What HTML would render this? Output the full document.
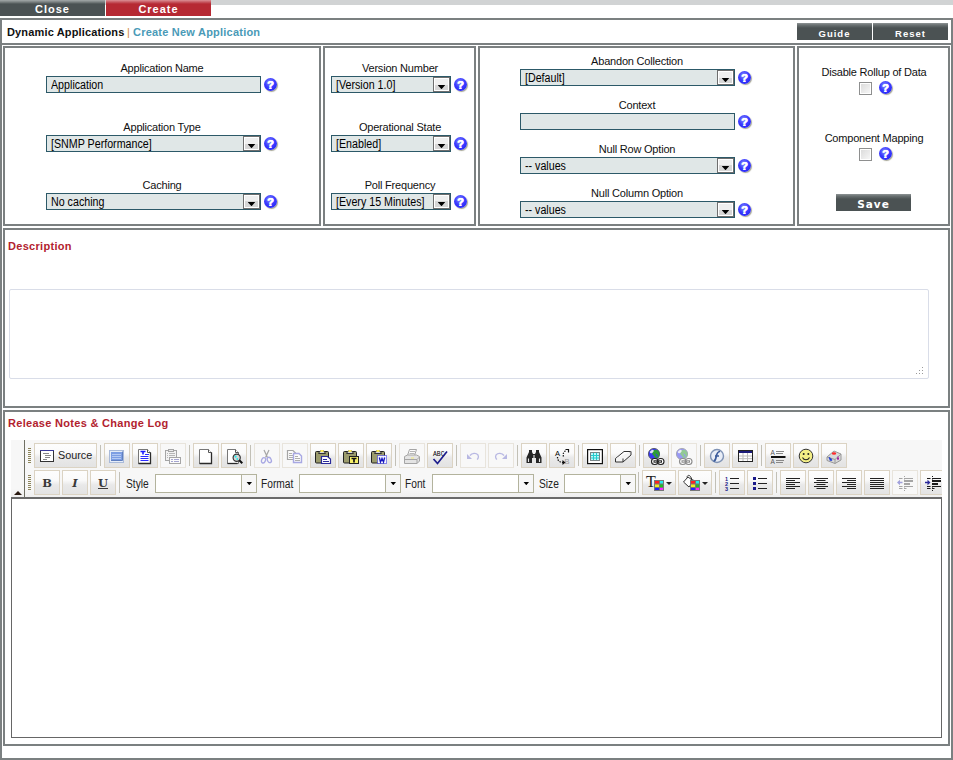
<!DOCTYPE html>
<html><head><meta charset="utf-8"><title>Dynamic Applications | Create New Application</title>
<style>
html,body{margin:0;padding:0;background:#fff}
body{width:953px;height:760px;position:relative;overflow:hidden;font-family:"Liberation Sans",sans-serif;font-size:11px;color:#1c1c1c}
div,span{box-sizing:border-box}
.a{position:absolute}
.box{position:absolute;border:2px solid #7b8081;background:#fff}
.tab{position:absolute;top:0;height:16px;color:#fff;font-weight:bold;font-size:11px;letter-spacing:1px;text-align:center;line-height:19px;overflow:hidden}
.btn{position:absolute;height:17px;width:75px;color:#fff;font-weight:bold;font-size:9.5px;letter-spacing:1px;text-align:center;line-height:22px;overflow:hidden;background:linear-gradient(#8e9495 0,#6a7172 2px,#4b5253 5px,#4b5253 100%)}
.lbl{position:absolute;text-align:center;font-size:11px;line-height:13px;white-space:nowrap;letter-spacing:-.2px;color:#111}
.fld{position:absolute;height:17px;border:1px solid #2c5968;background:#e0e7e7;font-size:12px;line-height:15px;white-space:nowrap;overflow:hidden}
.fld span.t{position:absolute;left:4px;top:1px;color:#000;transform:scaleX(.89);transform-origin:0 50%}
.arr{position:absolute;right:0;top:0;width:17px;height:15px;border:1px solid #6e6e6e;background:#fff}
.arr i{position:absolute;left:1px;top:1px;right:1px;bottom:1px;background:linear-gradient(#efefef 0,#efefef 50%,#d6d6d6 50%,#d6d6d6 100%)}
.arr b{position:absolute;left:3.7px;top:7px;width:7.6px;height:4.3px;background:#000;clip-path:polygon(0 0,100% 0,50% 100%)}
.help{position:absolute;width:13px;height:13px;border-radius:50%;background:radial-gradient(circle at 45% 35%,#8f96ff 0,#3b3bff 45%,#1a1af0 100%);box-shadow:1px 1px 1px rgba(90,90,60,.55);color:#fff;font-weight:bold;font-size:11px;line-height:15px;text-align:center;text-shadow:.35px 0 0 #fff,-.35px 0 0 #fff;overflow:hidden}
.cb{position:absolute;width:13px;height:13px;border:1px solid #8e8f8f;background:#fff}
.cb i{position:absolute;left:1px;top:1px;right:1px;bottom:1px;background:linear-gradient(135deg,#dcdcdc,#f6f6f6)}
.h{position:absolute;font-weight:bold;font-size:11px;line-height:13px;white-space:nowrap}
.tb{position:absolute;height:25px;border:1px solid #dbd3c3;background:linear-gradient(#fdfdfd 0,#fafafa 40%,#e9e9e9 60%,#e3e3e3 100%)}
.tb.d{border-color:#e8e4dc;background:#f8f8f8}
.tb svg{position:absolute;left:4px;top:4px;width:16px;height:16px;overflow:visible}
.tb.d svg{opacity:.5}
.sep{position:absolute;width:1px;height:21px;background:#c2c0b6}
.grip{position:absolute;width:3px;height:15px;background:repeating-linear-gradient(#8d855a 0,#8d855a 1px,transparent 1px,transparent 2px)}
.cl{position:absolute;font-size:12px;line-height:14px;white-space:nowrap;transform:scaleX(.85);transform-origin:0 50%;color:#222}
.combo{position:absolute;height:19px;border:1px solid #b3b39d;background:#fff}
.combo i{position:absolute;right:0;top:0;bottom:0;width:14px;border-left:1px solid #b3b39d;background:#f7f7f7}
.combo b{position:absolute;right:3.8px;top:6.8px;width:5.8px;height:3.4px;background:#000;clip-path:polygon(0 0,100% 0,50% 100%)}
</style></head>
<body>
<div class="a" style="left:0;top:0;width:953px;height:5px;background:#d1d3d4"></div>
<div class="tab" style="left:0;width:105px;background:linear-gradient(#a4a9aa 0,#7b8182 2px,#4b5254 4px,#4b5254 100%)">Close</div>
<div class="tab" style="left:106px;width:105px;background:linear-gradient(#dc9096 0,#c75a62 2px,#b62933 4px,#b62933 100%)">Create</div>
<div class="box" style="left:0;top:18px;width:953px;height:742px"></div>
<div class="a" style="left:2px;top:43px;width:949px;height:2px;background:#7b8081"></div>
<div class="h" style="left:7px;top:26px;color:#111;letter-spacing:.15px">Dynamic Applications</div>
<div class="h" style="left:127px;top:26px;color:#d4883f;font-weight:normal">|</div>
<div class="h" style="left:133px;top:26px;color:#4a9ab7;letter-spacing:.22px">Create New Application</div>
<div class="btn" style="left:797px;top:23px">Guide</div>
<div class="btn" style="left:873px;top:23px">Reset</div>
<div class="box" style="left:3px;top:46px;width:318px;height:180px"></div>
<div class="box" style="left:323px;top:46px;width:153px;height:180px"></div>
<div class="box" style="left:478px;top:46px;width:317px;height:180px"></div>
<div class="box" style="left:797px;top:46px;width:153px;height:180px"></div>
<div class="box" style="left:3px;top:228px;width:947px;height:180px"></div>
<div class="box" style="left:3px;top:410px;width:947px;height:336px"></div>
<div class="lbl" style="left:62px;top:62px;width:200px">Application Name</div>
<div class="fld" style="left:46px;top:76px;width:215px"><span class="t">Application</span></div>
<div class="help" style="left:264px;top:78px">?</div>
<div class="lbl" style="left:62px;top:121px;width:200px">Application Type</div>
<div class="fld" style="left:46px;top:135px;width:215px"><span class="t">[SNMP Performance]</span><span class="arr"><i></i><b></b></span></div>
<div class="help" style="left:264px;top:137px">?</div>
<div class="lbl" style="left:62px;top:179px;width:200px">Caching</div>
<div class="fld" style="left:46px;top:193px;width:215px"><span class="t">No caching</span><span class="arr"><i></i><b></b></span></div>
<div class="help" style="left:264px;top:195px">?</div>
<div class="lbl" style="left:300px;top:62px;width:200px">Version Number</div>
<div class="fld" style="left:331px;top:76px;width:120px"><span class="t">[Version 1.0]</span><span class="arr"><i></i><b></b></span></div>
<div class="help" style="left:454px;top:78px">?</div>
<div class="lbl" style="left:300px;top:121px;width:200px">Operational State</div>
<div class="fld" style="left:331px;top:135px;width:120px"><span class="t">[Enabled]</span><span class="arr"><i></i><b></b></span></div>
<div class="help" style="left:454px;top:137px">?</div>
<div class="lbl" style="left:300px;top:179px;width:200px">Poll Frequency</div>
<div class="fld" style="left:331px;top:193px;width:120px"><span class="t">[Every 15 Minutes]</span><span class="arr"><i></i><b></b></span></div>
<div class="help" style="left:454px;top:195px">?</div>
<div class="lbl" style="left:537px;top:55px;width:200px">Abandon Collection</div>
<div class="fld" style="left:520px;top:69px;width:215px"><span class="t">[Default]</span><span class="arr"><i></i><b></b></span></div>
<div class="help" style="left:738px;top:71px">?</div>
<div class="lbl" style="left:537px;top:99px;width:200px">Context</div>
<div class="fld" style="left:520px;top:113px;width:215px"></div>
<div class="help" style="left:738px;top:115px">?</div>
<div class="lbl" style="left:537px;top:143px;width:200px">Null Row Option</div>
<div class="fld" style="left:520px;top:157px;width:215px"><span class="t">-- values</span><span class="arr"><i></i><b></b></span></div>
<div class="help" style="left:738px;top:159px">?</div>
<div class="lbl" style="left:537px;top:187px;width:200px">Null Column Option</div>
<div class="fld" style="left:520px;top:201px;width:215px"><span class="t">-- values</span><span class="arr"><i></i><b></b></span></div>
<div class="help" style="left:738px;top:203px">?</div>
<div class="lbl" style="left:774px;top:66px;width:200px">Disable Rollup of Data</div>
<div class="cb" style="left:859px;top:82px"><i></i></div>
<div class="help" style="left:879px;top:81px">?</div>
<div class="lbl" style="left:774px;top:132px;width:200px">Component Mapping</div>
<div class="cb" style="left:859px;top:148px"><i></i></div>
<div class="help" style="left:879px;top:147px">?</div>
<div class="btn" style="left:836px;top:194px;font-family:'DejaVu Sans',sans-serif;font-size:10.5px;line-height:20px">Save</div>
<div class="h" style="left:8px;top:240px;color:#b2222e;letter-spacing:.3px">Description</div>
<div class="a" style="left:9px;top:289px;width:920px;height:90px;border:1px solid #d9dde8;border-radius:2px;background:#fff"></div>
<div class="a" style="left:922px;top:367px;width:1px;height:1px;background:#9a9a9a"></div><div class="a" style="left:919px;top:370px;width:1px;height:1px;background:#9a9a9a"></div><div class="a" style="left:922px;top:370px;width:1px;height:1px;background:#9a9a9a"></div><div class="a" style="left:916px;top:373px;width:1px;height:1px;background:#9a9a9a"></div><div class="a" style="left:919px;top:373px;width:1px;height:1px;background:#9a9a9a"></div><div class="a" style="left:922px;top:373px;width:1px;height:1px;background:#9a9a9a"></div>
<div class="h" style="left:8px;top:417px;color:#b2222e;letter-spacing:.3px">Release Notes &amp; Change Log</div>
<div class="a" style="left:11px;top:440px;width:931px;height:57px;background:linear-gradient(#f7f7f7 0,#f7f7f7 85%,#efefef 100%);overflow:hidden" id="tbar">
<div class="a" style="left:13px;top:0;width:1px;height:57px;background:#6f6f63"></div>
<div class="a" style="left:3px;top:51px;width:0;height:0;border-left:4px solid transparent;border-right:4px solid transparent;border-bottom:4px solid #2a1a10"></div>
<div class="grip" style="left:17px;top:8px"></div><div class="grip" style="left:17px;top:35px"></div>
<div class="tb" style="left:23px;top:3px;width:63px"><svg viewBox="0 0 16 16"><rect x="1.500" y="2.500" width="13" height="11" fill="#fff" stroke="#333"/><rect x="1" y="2" width="14" height="1" fill="#3a3a9a"/><path d="M4 5.500h6M6 7.500h6M6 9.500h5M4 11.500h4" stroke="#888" fill="none"/></svg><span class="cl" style="left:23px;top:4px;font-size:11.500px;transform:scaleX(.94)">Source</span></div>
<div class="sep" style="left:89px;top:5px"></div>
<div class="tb" style="left:93px;top:3px;width:26px"><svg viewBox="0 0 16 16"><rect x="0.500" y="2.500" width="14" height="12" fill="#e6edf8" stroke="#a9bad9"/><rect x="2" y="4" width="11" height="9" fill="#7d9ee3"/><path d="M2 12.500h11.500v-9" stroke="#5f7fc0" fill="none"/><path d="M3 6.500h9M3 8.500h9M3 10.500h9" stroke="#b4c9f3" fill="none"/></svg></div>
<div class="tb" style="left:121px;top:3px;width:26px"><svg viewBox="0 0 16 16"><path d="M1.500 1.500h9l3 3v11h-12z" fill="#fff" stroke="#777"/><path d="M10.500 1.500v3h3" fill="#fff" stroke="#555"/><path d="M1.500 15.500h12v-11" fill="none" stroke="#2a2a2a" stroke-width="1.300"/><path d="M3.500 3.500h5M6 3.500v3" stroke="#1a1aff" stroke-width="1.600" fill="none"/><path d="M8 6.500h4M3.500 8.500h8M3.500 10.500h8M3.500 12.500h8" stroke="#2a2aff" fill="none"/></svg></div>
<div class="tb d" style="left:149px;top:3px;width:26px"><svg viewBox="0 0 16 16"><rect x="0.500" y="2.500" width="11" height="10" fill="#eee" stroke="#555"/><rect x="3.500" y="1.500" width="5" height="2" fill="#ddd" stroke="#555"/><path d="M2 5.500h1M2 7.500h1M2 9.500h1M4 5.500h6M4 7.500h6" stroke="#777"/><rect x="4.500" y="9.500" width="11" height="6" fill="#fff" stroke="#555"/><path d="M6 11.500h2M9 11.500h5M6 13.500h2M9 13.500h5" stroke="#55a" fill="none"/></svg></div>
<div class="sep" style="left:178px;top:5px"></div>
<div class="tb" style="left:182px;top:3px;width:26px"><svg viewBox="0 0 16 16"><path d="M1.5 1.5h9l3 3v11h-12z" fill="#fff" stroke="#777"/><path d="M10.5 1.5v3h3" fill="#fff" stroke="#555"/><path d="M1.5 15.500h12v-11" fill="none" stroke="#2a2a2a" stroke-width="1.300"/></svg></div>
<div class="tb" style="left:210px;top:3px;width:26px"><svg viewBox="0 0 16 16"><path d="M1.5 1.5h8l3 3v11h-11z" fill="#fff" stroke="#777"/><path d="M9.500 1.500v3h3" fill="#fff" stroke="#555"/><path d="M1.500 15.500h10" stroke="#2a2a2a" stroke-width="1.300"/><circle cx="10.700" cy="9.700" r="3.600" fill="#d6d6d6" stroke="#333" stroke-width="1.200"/><circle cx="9.600" cy="8.600" r="1.100" fill="#2ee"/><circle cx="11.300" cy="11" r=".900" fill="#2ee"/><path d="M13.300 12.300l3 3" stroke="#111" stroke-width="2"/></svg></div>
<div class="sep" style="left:239px;top:5px"></div>
<div class="tb d" style="left:243px;top:3px;width:26px"><svg viewBox="0 0 16 16"><path d="M5 2l3.500 7.500M10 2l-3.500 7.500" stroke="#555" stroke-width="1.200" fill="none"/><ellipse cx="4.500" cy="12.300" rx="1.900" ry="2.800" transform="rotate(25 4.500 12.300)" fill="none" stroke="#5a5ad0" stroke-width="1.300"/><ellipse cx="10.300" cy="12" rx="1.900" ry="2.800" transform="rotate(-25 10.300 12)" fill="none" stroke="#5a5ad0" stroke-width="1.300"/></svg></div>
<div class="tb d" style="left:271px;top:3px;width:26px"><svg viewBox="0 0 16 16"><path d="M0.500 2.500h5.500l2.500 2.500v6.500h-8z" fill="#fff" stroke="#555" stroke-width="1.200"/><path d="M2 5.500h3M2 7.500h5M2 9.500h5" stroke="#666"/><path d="M6.500 5.500h5.500l2.500 2.500v6.500h-8z" fill="#fff" stroke="#5a5ad0" stroke-width="1.400"/><path d="M8 8.500h3M8 10.500h5M8 12.500h5" stroke="#666"/></svg></div>
<div class="tb" style="left:299px;top:3px;width:26px"><svg viewBox="0 0 16 16"><rect x="0.500" y="3.500" width="13" height="11.500" rx="1" fill="#9b9b6c" stroke="#222"/><path d="M3.500 5.500l1.500-2.500h4l1.500 2.500z" fill="#d8d8d8" stroke="#333"/><rect x="5.500" y="2" width="3" height="2" fill="#ffee55"/><path d="M6.500 8.500h6l3 2.500v4.500h-9z" fill="#fff" stroke="#2a2a9a" stroke-width="1.200"/><path d="M8 11.500h4M8 13.500h6" stroke="#2a2a9a" stroke-width="1.200"/></svg></div>
<div class="tb" style="left:327px;top:3px;width:26px"><svg viewBox="0 0 16 16"><rect x="0.500" y="3.500" width="13" height="11.500" rx="1" fill="#9b9b6c" stroke="#222"/><path d="M3.500 5.500l1.500-2.500h4l1.500 2.500z" fill="#d8d8d8" stroke="#333"/><rect x="5.500" y="2" width="3" height="2" fill="#ffee55"/><rect x="6.500" y="8.500" width="9" height="7" fill="#f7f06a" stroke="#222"/><path d="M8.500 10.500h5M11 10.500v4" stroke="#111" stroke-width="1.700" fill="none"/></svg></div>
<div class="tb" style="left:355px;top:3px;width:26px"><svg viewBox="0 0 16 16"><rect x="0.500" y="3.500" width="13" height="11.500" rx="1" fill="#9b9b6c" stroke="#222"/><path d="M3.500 5.500l1.500-2.500h4l1.500 2.500z" fill="#d8d8d8" stroke="#333"/><rect x="5.500" y="2" width="3" height="2" fill="#ffee55"/><rect x="6.500" y="7.500" width="9" height="8" fill="#fff" stroke="#1a1ae0" stroke-dasharray="1 1"/><rect x="7.500" y="8.500" width="7" height="6" fill="#e8ebff"/><path d="M8.300 9.500l1.200 4.500 1.500-3.500 1.500 3.500 1.200-4.500" stroke="#1a1ac0" stroke-width="1.300" fill="none"/></svg></div>
<div class="sep" style="left:384px;top:5px"></div>
<div class="tb d" style="left:388px;top:3px;width:26px"><svg viewBox="0 0 16 16"><path d="M3.500 7.500l2-6h7l-2 6z" fill="#fff" stroke="#555"/><path d="M6 3.500h5M5.500 5.500h5" stroke="#777"/><path d="M0.500 8.500l3-1.500h9l3 1.500v4.500l-2.500 2.500h-12.500z" fill="#d2d2d2" stroke="#555"/><path d="M0.500 11.500h12.500l2.500-2.500" stroke="#555" fill="none"/><path d="M13 11.500v4" stroke="#555"/><rect x="7" y="9.500" width="3" height="1" fill="#e8d800"/></svg></div>
<div class="tb" style="left:416px;top:3px;width:26px"><svg viewBox="0 0 16 16"><text x="1" y="7.500" font-family="Liberation Mono,monospace" font-size="7" fill="#000" textLength="11.500" lengthAdjust="spacingAndGlyphs">ABC</text><path d="M1.500 11l4 4.500 9.500-12" stroke="#1c1c8c" stroke-width="1.700" fill="none"/></svg></div>
<div class="sep" style="left:445px;top:5px"></div>
<div class="tb d" style="left:449px;top:3px;width:26px"><svg viewBox="0 0 16 16"><path d="M2 6v5h5z" fill="#7a7ad0"/><path d="M5 7.500C7 5 11 4.500 13 7c1 2 0 4-1 4.500" stroke="#7a7ad0" stroke-width="1.300" fill="none"/></svg></div>
<div class="tb d" style="left:477px;top:3px;width:26px"><svg viewBox="0 0 16 16"><path d="M14 6v5h-5z" fill="#7a7ad0"/><path d="M11 7.500C9 5 5 4.500 3 7c-1 2 0 4 1 4.500" stroke="#7a7ad0" stroke-width="1.300" fill="none"/></svg></div>
<div class="sep" style="left:506px;top:5px"></div>
<div class="tb" style="left:510px;top:3px;width:26px"><svg viewBox="0 0 16 16"><path d="M0.500 15v-5.500l2.500-5.500v-2h3v2l1 2h2l1-2v-2h3v2l2.500 5.500v5.500h-5.500v-5h-4v5z" fill="#262626"/><path d="M2.500 10.500v3.500M13.500 10.500v3.500" stroke="#e8e8e8" stroke-width="1.100"/><path d="M8 7v3" stroke="#fff" stroke-width="1"/></svg></div>
<div class="tb" style="left:538px;top:3px;width:26px"><svg viewBox="0 0 16 16"><text x="1" y="7.500" font-family="Liberation Sans,sans-serif" font-size="7.500" fill="#000">A</text><text x="10.500" y="15.500" font-family="Liberation Sans,sans-serif" font-size="7.500" fill="#999">B</text><path d="M3.500 9c0 4 2.500 5.500 5.500 5.500" stroke="#111" stroke-width="1.300" stroke-dasharray="1.300 1.300" fill="none"/><path d="M8.500 12l3 2.500-3 2.500z" fill="#111"/><path d="M9.500 8.500c-1-3 .500-5.500 3-6" stroke="#111" stroke-width="1.300" stroke-dasharray="1.300 1.300" fill="none"/><path d="M11.500 1.500h3v3" stroke="#111" stroke-width="1.200" fill="none"/></svg></div>
<div class="sep" style="left:567px;top:5px"></div>
<div class="tb" style="left:571px;top:3px;width:26px"><svg viewBox="0 0 16 16"><rect x="0.600" y="1.600" width="14.800" height="14" fill="#fff" stroke="#111" stroke-width="1.200"/><rect x="3.500" y="4.500" width="9" height="8" fill="#bff6fb" stroke="#111" stroke-dasharray="1 1"/><path d="M6.500 5v7M9.500 5v7M4 7.500h8M4 10h8" stroke="#2cc" /></svg></div>
<div class="tb" style="left:599px;top:3px;width:26px"><svg viewBox="0 0 16 16"><path d="M0.500 10.500l8.500-7h7l-8.500 7z" fill="#fff" stroke="#333"/><path d="M0.500 10.500v3.500h7.500l8-7v-3.500" fill="#f4f4f4" stroke="#333"/><path d="M8 10.500v3.500" stroke="#333"/></svg></div>
<div class="sep" style="left:628px;top:5px"></div>
<div class="tb" style="left:632px;top:3px;width:26px"><svg viewBox="0 0 16 16"><circle cx="6" cy="6" r="5.600" fill="#3a3af2" stroke="#556" stroke-width=".900"/><path d="M5 2.500c2-1.500 5-.500 6 1.500c.800 2 .500 4-1 5.500c-1.500 1-3 1-3.500-.500c-.300-1.500-1.500-1.500-2-2.500c-.500-1.500 0-3 .500-4z" fill="#2e9e35"/><path d="M7.500 6l1.500 1v2" stroke="#3a3af2" stroke-width="1" fill="none"/><ellipse cx="3.800" cy="3.600" rx="2.200" ry="1.300" transform="rotate(-35 3.800 3.600)" fill="#fff" opacity=".850"/><rect x="3.500" y="10.500" width="6.500" height="6" rx="3" fill="#fff" stroke="#222" stroke-width="1.100"/><rect x="9.500" y="10.500" width="6.500" height="6" rx="3" fill="#fff" stroke="#222" stroke-width="1.100"/><path d="M5.500 13.500h8.500" stroke="#222" stroke-width="2.400"/><path d="M6.500 13.500h2M11 13.500h2" stroke="#bbb" stroke-width=".800"/></svg></div>
<div class="tb d" style="left:660px;top:3px;width:26px"><svg viewBox="0 0 16 16"><circle cx="6" cy="6" r="5.600" fill="#3a3af2" stroke="#556" stroke-width=".900"/><path d="M5 2.500c2-1.500 5-.500 6 1.500c.800 2 .500 4-1 5.500c-1.500 1-3 1-3.500-.500c-.300-1.500-1.500-1.500-2-2.500c-.500-1.500 0-3 .500-4z" fill="#2e9e35"/><path d="M7.500 6l1.500 1v2" stroke="#3a3af2" stroke-width="1" fill="none"/><ellipse cx="3.800" cy="3.600" rx="2.200" ry="1.300" transform="rotate(-35 3.800 3.600)" fill="#fff" opacity=".850"/><rect x="3.500" y="10.500" width="6.500" height="6" rx="3" fill="#fff" stroke="#222" stroke-width="1.100"/><rect x="9.500" y="10.500" width="6.500" height="6" rx="3" fill="#fff" stroke="#222" stroke-width="1.100"/><path d="M5.500 13.500h8.500" stroke="#222" stroke-width="2.400"/><path d="M6.500 13.500h2M11 13.500h2" stroke="#bbb" stroke-width=".800"/></svg></div>
<div class="sep" style="left:689px;top:5px"></div>
<div class="tb" style="left:693px;top:3px;width:26px"><svg viewBox="0 0 16 16"><circle cx="8" cy="8" r="6.500" fill="#e9eef7" stroke="#7f93b5" stroke-width="1.400"/><path d="M11 3.500c-3 0-3.500 3-4 6s-1 3.500-2.500 3.500M6 8h4" stroke="#3b5b9b" stroke-width="1.700" fill="none"/></svg></div>
<div class="tb" style="left:721px;top:3px;width:26px"><svg viewBox="0 0 16 16"><rect x="1.500" y="2.500" width="14" height="11" fill="#fff" stroke="#222"/><rect x="1" y="2" width="15" height="3" fill="#1a1a7a"/><path d="M1.500 8h14M1.500 10.700h14M6 5v8.500M10.500 5v8.500" stroke="#bbb" fill="none"/><rect x="1.500" y="2.500" width="14" height="11" fill="none" stroke="#222"/></svg></div>
<div class="sep" style="left:750px;top:5px"></div>
<div class="tb" style="left:754px;top:3px;width:26px"><svg viewBox="0 0 16 16"><text x="0.500" y="6.500" font-family="Liberation Sans,sans-serif" font-size="6.500" fill="#555">A</text><text x="0.500" y="15.500" font-family="Liberation Sans,sans-serif" font-size="6.500" fill="#555">A</text><path d="M6 3.500h8M6 5.500h7M6 12.500h8M6 14.500h7" stroke="#888" fill="none"/><path d="M1 9h14.500" stroke="#111" stroke-width="2"/></svg></div>
<div class="tb" style="left:782px;top:3px;width:26px"><svg viewBox="0 0 16 16"><circle cx="8" cy="8" r="6.800" fill="#f3ee86" stroke="#333"/><circle cx="5.700" cy="6" r="1" fill="#222"/><circle cx="10.300" cy="6" r="1" fill="#222"/><path d="M4.500 9.500c1.500 3 5.500 3 7 0" stroke="#222" stroke-width="1.100" fill="none"/></svg></div>
<div class="tb" style="left:810px;top:3px;width:26px"><svg viewBox="0 0 16 16"><path d="M1 9l7-6 7 3v6l-6 3.500-8-3z" fill="#d9d9d9" stroke="#999"/><path d="M1 9l8 2.500 6-5.500" stroke="#999" fill="none"/><path d="M9 11.500v4" stroke="#999"/><ellipse cx="8" cy="5.500" rx="2.200" ry="1.300" fill="#ff2a2a"/><path d="M3 9.500l3 3M3.500 12l2-1" stroke="#1a3ad8" stroke-width="1.400"/><path d="M12 8.500v3.500M11 10.500h2" stroke="#a020a0" stroke-width="1.200"/></svg></div>
<div class="tb" style="left:23px;top:30px;width:26px;text-align:center;font-family:'DejaVu Serif',serif;font-size:11.5px;line-height:25px;color:#3a3a3a;font-weight:bold">B</div>
<div class="tb" style="left:51px;top:30px;width:26px;text-align:center;font-family:'DejaVu Serif',serif;font-size:11.5px;line-height:25px;color:#3a3a3a;font-weight:bold;font-style:italic">I</div>
<div class="tb" style="left:79px;top:30px;width:26px;text-align:center;font-family:'DejaVu Serif',serif;font-size:11.5px;line-height:25px;color:#3a3a3a;font-weight:bold;text-decoration:underline">U</div>
<div class="sep" style="left:108px;top:32px"></div>
<span class="cl" style="left:115px;top:37px">Style</span>
<div class="combo" style="left:144px;top:34px;width:102px"><i></i><b></b></div>
<span class="cl" style="left:250px;top:37px">Format</span>
<div class="combo" style="left:288px;top:34px;width:102px"><i></i><b></b></div>
<span class="cl" style="left:394px;top:37px">Font</span>
<div class="combo" style="left:421px;top:34px;width:102px"><i></i><b></b></div>
<span class="cl" style="left:528px;top:37px">Size</span>
<div class="combo" style="left:553px;top:34px;width:72px"><i></i><b></b></div>
<div class="sep" style="left:627px;top:32px"></div>
<div class="tb" style="left:631px;top:30px;width:34px"><svg viewBox="0 0 16 16"><text x="-1" y="11.500" font-family="Liberation Serif,serif" font-size="16" fill="#222">T</text><rect x="7" y="5" width="10" height="11" fill="#777"/><rect x="8" y="6" width="4" height="2.500" fill="#f22"/><rect x="13" y="6" width="3" height="2.500" fill="#2ee"/><rect x="8" y="9.500" width="4" height="2.500" fill="#ee2"/><rect x="13" y="9.500" width="3" height="2.500" fill="#2b2"/><rect x="8" y="13" width="4" height="2" fill="#22f"/><rect x="13" y="13" width="3" height="2" fill="#f2f"/></svg><span class="a" style="left:23px;top:11px;width:0;height:0;border-left:3px solid transparent;border-right:3px solid transparent;border-top:3px solid #222"></span></div>
<div class="tb" style="left:667px;top:30px;width:34px"><svg viewBox="0 0 16 16"><path d="M0.500 7l4.500-5 5.500 4-4.500 6z" fill="#fff" stroke="#333"/><path d="M4 2.500c0-2 2-3 3.500-1l1.500 3" stroke="#333" fill="none"/><path d="M9.500 4.500c1 2 1 4 .500 6" stroke="#333" stroke-width="1.600" fill="none"/><rect x="7" y="5" width="10" height="11" fill="#777"/><rect x="8" y="6" width="4" height="2.500" fill="#f22"/><rect x="13" y="6" width="3" height="2.500" fill="#2ee"/><rect x="8" y="9.500" width="4" height="2.500" fill="#ee2"/><rect x="13" y="9.500" width="3" height="2.500" fill="#2b2"/><rect x="8" y="13" width="4" height="2" fill="#22f"/><rect x="13" y="13" width="3" height="2" fill="#f2f"/></svg><span class="a" style="left:23px;top:11px;width:0;height:0;border-left:3px solid transparent;border-right:3px solid transparent;border-top:3px solid #222"></span></div>
<div class="sep" style="left:704px;top:32px"></div>
<div class="tb" style="left:708px;top:30px;width:26px"><svg viewBox="0 0 16 16"><text x="1" y="5.500" font-family="Liberation Sans,sans-serif" font-size="5.500" font-weight="bold" fill="#1a1a8a">1</text><text x="1" y="10.500" font-family="Liberation Sans,sans-serif" font-size="5.500" font-weight="bold" fill="#1a1a8a">2</text><text x="1" y="15.500" font-family="Liberation Sans,sans-serif" font-size="5.500" font-weight="bold" fill="#1a1a8a">3</text><path d="M6 3.500h9M6 8.500h9M6 13.500h9" stroke="#222" fill="none"/></svg></div>
<div class="tb" style="left:736px;top:30px;width:26px"><svg viewBox="0 0 16 16"><rect x="1" y="2" width="3" height="3" fill="#1a1a8a"/><rect x="1" y="7" width="3" height="3" fill="#1a1a8a"/><rect x="1" y="12" width="3" height="3" fill="#1a1a8a"/><path d="M6 3.500h9M6 8.500h9M6 13.500h9" stroke="#222" fill="none"/></svg></div>
<div class="sep" style="left:765px;top:32px"></div>
<div class="tb" style="left:769px;top:30px;width:26px"><svg viewBox="0 0 16 16"><path d="M1 3.500h14M1 5.500h9M1 7.500h14M1 9.500h9M1 11.500h14M1 13.500h9" stroke="#222" fill="none"/></svg></div>
<div class="tb" style="left:797px;top:30px;width:26px"><svg viewBox="0 0 16 16"><path d="M1 3.500h14M3.500 5.500h9M1 7.500h14M3.500 9.500h9M1 11.500h14M3.500 13.500h9" stroke="#222" fill="none"/></svg></div>
<div class="tb" style="left:825px;top:30px;width:26px"><svg viewBox="0 0 16 16"><path d="M1 3.500h14M6 5.500h9M1 7.500h14M6 9.500h9M1 11.500h14M6 13.500h9" stroke="#222" fill="none"/></svg></div>
<div class="tb" style="left:853px;top:30px;width:26px"><svg viewBox="0 0 16 16"><path d="M1 3.500h14M1 5.500h14M1 7.500h14M1 9.500h14M1 11.500h14M1 13.500h14" stroke="#222" fill="none"/></svg></div>
<div class="tb d" style="left:881px;top:30px;width:26px"><svg viewBox="0 0 16 16"><path d="M7.500 1v15" stroke="#555" stroke-dasharray="1 2.500"/><path d="M2 3.500h3.500M7 3.500h9M2 11.500h3.500M7 11.500h9M2 13.500h3.500M7 13.500h2.500" stroke="#555" fill="none"/><rect x="7" y="5" width="9" height="2" fill="#555"/><rect x="7" y="8" width="6" height="2" fill="#555"/><path d="M1.500 7.500h4" stroke="#4a4ac0" stroke-width="1.500"/><path d="M0 7.500l3-2.700v5.400z" fill="#4a4ac0"/></svg></div>
<div class="tb" style="left:909px;top:30px;width:26px"><svg viewBox="0 0 16 16"><path d="M7.500 1v15" stroke="#1a1a1a" stroke-dasharray="1 2.500"/><path d="M2 3.500h3.500M7 3.500h9M2 11.500h3.500M7 11.500h9M2 13.500h3.500M7 13.500h2.500" stroke="#1a1a1a" fill="none"/><rect x="7" y="5" width="9" height="2" fill="#1a1a1a"/><rect x="7" y="8" width="6" height="2" fill="#1a1a1a"/><path d="M0 7.500h3.500" stroke="#2a2a9a" stroke-width="1.500"/><path d="M5.500 7.500l-3-2.700v5.400z" fill="#2a2a9a"/></svg></div>
</div>
<div class="a" style="left:11px;top:497px;width:931px;height:241px;border:1px solid #666;border-top:2px solid #6a6a6a;background:#fff"></div>
</body></html>
